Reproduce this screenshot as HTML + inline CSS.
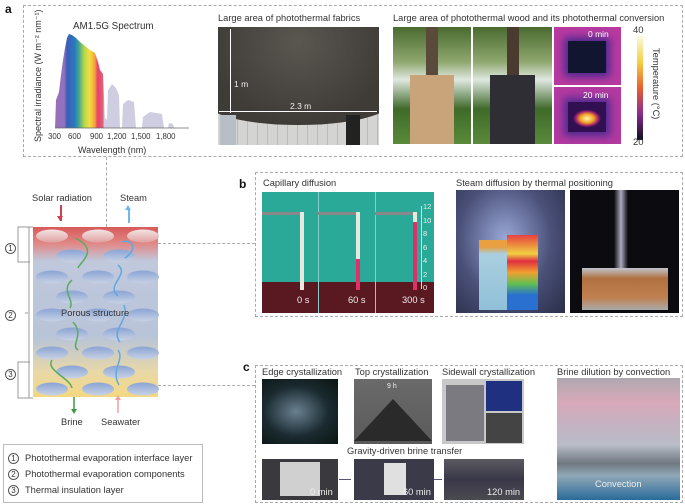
<!DOCTYPE html>
<html><head><meta charset="utf-8"><style>
*{margin:0;padding:0;box-sizing:border-box}
body{width:685px;height:504px;background:#fff;position:relative;overflow:hidden;font-family:"Liberation Sans",sans-serif;color:#333}
.a{position:absolute}
.t{position:absolute;font-size:9.3px;color:#333;white-space:nowrap}
.box{position:absolute;border:1px dashed #aaa}
.L{position:absolute;font-weight:bold;font-size:12px;color:#111}
.cn{display:inline-block;width:11px;height:11px;border:1px solid #555;border-radius:50%;font-size:8px;text-align:center;line-height:10px;margin-right:6px;vertical-align:middle}
</style></head><body>

<div class="L" style="left:5px;top:2px">a</div>
<div class="box" style="left:23px;top:5px;width:660px;height:152px"></div>

<svg class="a" style="left:0;top:0" width="215" height="160">
<defs><linearGradient id="sp" gradientUnits="userSpaceOnUse" x1="55" x2="188" y1="0" y2="0">
<stop offset="0" stop-color="#9b6fb6"/><stop offset="0.07" stop-color="#8d73c0"/><stop offset="0.09" stop-color="#3b5db5"/><stop offset="0.15" stop-color="#2a7bc0"/><stop offset="0.18" stop-color="#43a88c"/><stop offset="0.22" stop-color="#b8d64a"/><stop offset="0.26" stop-color="#f0e040"/><stop offset="0.30" stop-color="#f5a040"/><stop offset="0.32" stop-color="#e8406a"/><stop offset="0.36" stop-color="#e0607a"/><stop offset="0.37" stop-color="#cfcde2"/><stop offset="1" stop-color="#cfcde2"/></linearGradient></defs>
<polygon fill="url(#sp)" points="55,128 56,100 59,92 61,75 63,60 65,48 67,38 69,34 72,35 76,38 80,42 85,46 90,50 95,53 98,62 100,70 103,74 105,118 107,120 108,90 112,84 116,88 119,95 120,128 122,128 123,104 128,100 134,102 136,128 142,128 143,117 150,112 162,114 164,128 168,128 169,123 173,124 174,128"/>
<line x1="55" y1="128" x2="189" y2="128" stroke="#666" stroke-width="0.8"/>
<text x="73" y="29" font-size="9.8" fill="#333" font-family="Liberation Sans">AM1.5G  Spectrum</text>
<g font-size="7.8" fill="#333" font-family="Liberation Sans">
<text x="48" y="139">300</text><text x="68" y="139">600</text><text x="90" y="139">900</text><text x="107" y="139">1,200</text><text x="131" y="139">1,500</text><text x="156" y="139">1,800</text></g>
<text x="78" y="153" font-size="9" fill="#333" font-family="Liberation Sans">Wavelength (nm)</text>
<text transform="translate(41,142) rotate(-90)" font-size="9" fill="#333" font-family="Liberation Sans">Spectral irradiance (W m⁻² nm⁻¹)</text>
</svg>

<div class="t" style="left:218px;top:13px">Large area of photothermal fabrics</div>
<div class="a" style="left:218px;top:27px;width:161px;height:118px;background:repeating-linear-gradient(90deg,#d4d4d2 0,#d4d4d2 9px,#bbb 9px,#bbb 10px),#d4d4d2;overflow:hidden">
 <div class="a" style="left:-10px;top:-20px;width:181px;height:118px;background:radial-gradient(ellipse at 50% 30%,#5a5650,#3f3b37 70%);border-radius:0 0 50% 50%/0 0 18% 18%"></div>
 <div class="a" style="left:2px;top:88px;width:16px;height:30px;background:#b8bec6"></div>
 <div class="a" style="left:128px;top:88px;width:14px;height:30px;background:#222"></div>
 <div class="a" style="left:12px;top:2px;width:1px;height:84px;background:#fff"></div>
 <div class="a" style="left:1px;top:84px;width:158px;height:1px;background:#fff"></div>
 <div class="t" style="left:16px;top:52px;color:#eee;font-size:8.5px">1 m</div>
 <div class="t" style="left:72px;top:74px;color:#eee;font-size:8.5px">2.3 m</div>
</div>

<div class="t" style="left:393px;top:13px">Large area of photothermal wood and its photothermal conversion</div>
<div class="a" style="left:393px;top:27px;width:78px;height:117px;background:linear-gradient(#4a6a30,#8fa870 30%,#dfe8e0 45%,#3f6a2a 70%,#5a8a3a)">
 <div class="a" style="left:33px;top:0;width:12px;height:50px;background:#5a4a3a"></div>
 <div class="a" style="left:17px;top:48px;width:44px;height:69px;background:#c9a47a"></div></div>
<div class="a" style="left:473px;top:27px;width:79px;height:117px;background:linear-gradient(#4a6a30,#8fa870 30%,#dfe8e0 45%,#3f6a2a 70%,#5a8a3a)">
 <div class="a" style="left:34px;top:0;width:12px;height:50px;background:#4a3a30"></div>
 <div class="a" style="left:17px;top:48px;width:45px;height:69px;background:#2e2e34"></div></div>
<div class="a" style="left:554px;top:27px;width:67px;height:58px;background:#b83aa0">
 <div class="a" style="left:14px;top:14px;width:38px;height:32px;background:#111530;box-shadow:0 0 8px 4px #4a2a90"></div>
 <div class="t" style="left:34px;top:2px;color:#fff;font-size:8.5px">0 min</div></div>
<div class="a" style="left:554px;top:87px;width:67px;height:57px;background:#b23aa0">
 <div class="a" style="left:14px;top:15px;width:38px;height:30px;background:radial-gradient(ellipse 14px 9px at 50% 55%,#fff8b0,#f0a020 50%,#a02070 80%,#301050);box-shadow:0 0 8px 4px #4a2a90"></div>
 <div class="t" style="left:29px;top:3px;color:#fff;font-size:8.5px">20 min</div></div>
<div class="a" style="left:637px;top:36px;width:6px;height:104px;background:linear-gradient(#fafae0,#f6d040 25%,#e86030 50%,#8a2a90 75%,#101020)"></div>
<div class="t" style="left:633px;top:25px;font-size:9.5px">40</div>
<div class="t" style="left:633px;top:137px;font-size:9.5px">20</div>
<div class="t" style="left:661px;top:48px;transform:rotate(90deg);transform-origin:0 0">Temperature (°C)</div>

<div class="a" style="left:106px;top:157px;width:0;height:70px;border-left:1px dashed #aaa"></div>
<div class="a" style="left:158px;top:243px;width:97px;border-top:1px dashed #aaa"></div>
<div class="a" style="left:158px;top:385px;width:97px;border-top:1px dashed #aaa"></div>

<div class="t" style="left:32px;top:193px">Solar radiation</div>
<div class="t" style="left:120px;top:193px">Steam</div>
<div class="a" style="left:60px;top:205px;width:1.5px;height:16px;background:#d04050"></div>
<div class="a" style="left:57px;top:216px;border-left:3.5px solid transparent;border-right:3.5px solid transparent;border-top:5px solid #d04050"></div>
<div class="a" style="left:128px;top:209px;width:1.5px;height:14px;background:#70b8e8"></div>
<div class="a" style="left:125px;top:205px;border-left:3.5px solid transparent;border-right:3.5px solid transparent;border-bottom:5px solid #70b8e8"></div>
<div class="a" style="left:33px;top:227px;width:125px;height:170px;background:linear-gradient(#d85a5a 0,#e08a88 10%,#c0c8dc 20%,#b8c4d8 65%,#e8d8a8 85%,#f4d880 100%)"></div>
<svg class="a" style="left:0;top:0" width="200" height="440">
<defs><linearGradient id="el" x1="0" y1="0" x2="0" y2="1"><stop offset="0" stop-color="#8aa4d4"/><stop offset="1" stop-color="#c8d2e4"/></linearGradient>
<linearGradient id="el2" x1="0" y1="0" x2="0" y2="1"><stop offset="0" stop-color="#f4e4e4"/><stop offset="1" stop-color="#e0a0a0"/></linearGradient></defs>
<g fill="url(#el2)"><ellipse cx="52" cy="236" rx="16" ry="6.5"/><ellipse cx="98" cy="236" rx="16" ry="6.5"/><ellipse cx="143" cy="236" rx="16" ry="6.5"/></g>
<g fill="url(#el)">
<ellipse cx="72" cy="256" rx="16" ry="6.5"/><ellipse cx="119" cy="256" rx="16" ry="6.5"/>
<ellipse cx="52" cy="277" rx="16" ry="6.5"/><ellipse cx="98" cy="277" rx="16" ry="6.5"/><ellipse cx="143" cy="277" rx="16" ry="6.5"/>
<ellipse cx="72" cy="297" rx="16" ry="6.5"/><ellipse cx="119" cy="297" rx="16" ry="6.5"/>
<ellipse cx="52" cy="315" rx="16" ry="6.5"/><ellipse cx="98" cy="315" rx="16" ry="6.5"/><ellipse cx="143" cy="315" rx="16" ry="6.5"/>
<ellipse cx="72" cy="334" rx="16" ry="6.5"/><ellipse cx="119" cy="334" rx="16" ry="6.5"/>
<ellipse cx="52" cy="353" rx="16" ry="6.5"/><ellipse cx="98" cy="353" rx="16" ry="6.5"/><ellipse cx="143" cy="353" rx="16" ry="6.5"/>
<ellipse cx="72" cy="372" rx="16" ry="6.5"/><ellipse cx="119" cy="372" rx="16" ry="6.5"/>
<ellipse cx="52" cy="389" rx="16" ry="6.5"/><ellipse cx="98" cy="389" rx="16" ry="6.5"/><ellipse cx="143" cy="389" rx="16" ry="6.5"/></g>
<g fill="none" stroke-width="1.5">
<path d="M75 238 C100 250,80 262,78 268 M72 280 C60 290,75 300,70 308 M73 322 C85 335,70 345,78 350 M52 360 C45 370,70 378,72 388" stroke="#5aaa60"/>
<path d="M119 385 C110 370,125 360,118 350 M120 342 C110 330,130 320,124 305 M118 296 C105 285,130 275,118 265 M125 258 C140 248,130 238,122 242" stroke="#60a8e0"/>
</g>
<line x1="74" y1="397" x2="74" y2="410" stroke="#3a9a40" stroke-width="1.5"/><polygon points="71,409 77,409 74,414" fill="#3a9a40"/>
<line x1="118" y1="398" x2="118" y2="413" stroke="#f0a0a0" stroke-width="1.5"/><polygon points="115,400 121,400 118,395" fill="#f0a0a0"/>
<g fill="none" stroke="#999" stroke-width="1"><path d="M30 227 H18 V262 H30"/><path d="M30 362 H18 V398 H30"/><path d="M33 227 H29 V398 H33"/><line x1="25" y1="313" x2="28" y2="313"/></g>
</svg>
<div class="a" style="left:5px;top:240px"><span class="cn">1</span></div>
<div class="a" style="left:5px;top:307px"><span class="cn">2</span></div>
<div class="a" style="left:5px;top:366px"><span class="cn">3</span></div>
<div class="t" style="left:61px;top:308px;color:#333">Porous structure</div>
<div class="t" style="left:61px;top:417px">Brine</div>
<div class="t" style="left:101px;top:417px">Seawater</div>
<div class="a" style="left:3px;top:444px;width:200px;height:59px;border:1px solid #bbb"></div>
<div class="t" style="left:8px;top:453px"><span class="cn">1</span>Photothermal evaporation interface layer</div>
<div class="t" style="left:8px;top:469px"><span class="cn">2</span>Photothermal evaporation components</div>
<div class="t" style="left:8px;top:485px"><span class="cn">3</span>Thermal insulation layer</div>

<div class="L" style="left:239px;top:177px">b</div>
<div class="box" style="left:255px;top:172px;width:428px;height:145px"></div>
<div class="t" style="left:263px;top:178px">Capillary diffusion</div>
<div class="a" style="left:262px;top:192px;width:172px;height:121px;background:#2aa898">
 <div class="a" style="left:0;top:90px;width:172px;height:31px;background:#5a1820"></div>
 <div class="a" style="left:56px;top:0;width:1px;height:121px;background:#8cc"></div>
 <div class="a" style="left:113px;top:0;width:1px;height:121px;background:#8cc"></div>
 <div class="a" style="left:0;top:20px;width:40px;height:3px;background:#888"></div>
 <div class="a" style="left:56px;top:20px;width:40px;height:3px;background:#888"></div>
 <div class="a" style="left:113px;top:20px;width:40px;height:3px;background:#888"></div>
 <div class="a" style="left:38px;top:20px;width:4px;height:78px;background:#e8e8e0"></div>
 <div class="a" style="left:94px;top:20px;width:4px;height:78px;background:linear-gradient(#e8e8e0 60%,#e0306a 60%)"></div>
 <div class="a" style="left:151px;top:20px;width:4px;height:78px;background:linear-gradient(#e8e8e0 13%,#e0306a 13%)"></div>
 <div class="a" style="left:159px;top:14px;width:1px;height:83px;background:#ddd"></div>
 <div class="t" style="left:161px;top:8px;color:#eee;font-size:7.5px;line-height:13.5px">12<br>10<br>8<br>6<br>4<br>2<br>0</div>
 <div class="t" style="left:35px;top:103px;color:#eee">0 s</div>
 <div class="t" style="left:86px;top:103px;color:#eee">60 s</div>
 <div class="t" style="left:140px;top:103px;color:#eee">300 s</div>
</div>
<div class="t" style="left:456px;top:178px">Steam diffusion by thermal positioning</div>
<div class="a" style="left:456px;top:190px;width:109px;height:123px;background:radial-gradient(ellipse at 45% 40%,#9aa8d8,#4a5078 55%,#2a2e48)">
 <div class="a" style="left:23px;top:50px;width:28px;height:70px;background:linear-gradient(#e8a040 10%,#aacfe0 20%,#90c0d8)"></div>
 <div class="a" style="left:51px;top:45px;width:31px;height:75px;background:linear-gradient(#e84040,#f0d040 25%,#e03040 35%,#f0a030 50%,#60c050 65%,#2a70d0 80%)"></div>
</div>
<div class="a" style="left:570px;top:190px;width:109px;height:123px;background:#0c0c10">
 <div class="a" style="left:44px;top:0;width:14px;height:80px;background:linear-gradient(90deg,transparent,#aab 50%,transparent)"></div>
 <div class="a" style="left:12px;top:78px;width:86px;height:42px;background:linear-gradient(#c0c4cc,#b07040 25%,#c08050 70%,#aaa)"></div>
</div>

<div class="L" style="left:243px;top:360px">c</div>
<div class="box" style="left:255px;top:365px;width:428px;height:138px"></div>
<div class="t" style="left:262px;top:367px">Edge crystallization</div>
<div class="t" style="left:355px;top:367px">Top crystallization</div>
<div class="t" style="left:442px;top:367px">Sidewall crystallization</div>
<div class="t" style="left:557px;top:367px">Brine dilution by convection</div>
<div class="a" style="left:262px;top:379px;width:76px;height:65px;background:radial-gradient(ellipse at 45% 50%,#6a8090,#1a2a30 55%,#0a1510)"></div>
<div class="a" style="left:354px;top:379px;width:78px;height:65px;background:linear-gradient(#6a6a6a,#5a5a5a)">
 <div class="a" style="left:0;top:20px;width:0;height:0;border-left:39px solid transparent;border-right:39px solid transparent;border-bottom:42px solid #2a2a2a"></div>
 <div class="t" style="left:33px;top:4px;color:#eee;font-size:7px">9 h</div></div>
<div class="a" style="left:442px;top:379px;width:82px;height:65px;background:#c8c8c8">
 <div class="a" style="left:4px;top:6px;width:38px;height:56px;background:#7a7a80"></div>
 <div class="a" style="left:44px;top:2px;width:36px;height:30px;background:#203080"></div>
 <div class="a" style="left:44px;top:34px;width:36px;height:30px;background:#444"></div></div>
<div class="a" style="left:557px;top:378px;width:123px;height:122px;background:linear-gradient(#b0a8b0,#d8a8b8 20%,#c8b0c0 35%,#b8bcc8 55%,#707880 70%,#90a8b8 80%,#2a6a9a)">
 <div class="t" style="left:38px;top:101px;color:#eee">Convection</div></div>
<div class="t" style="left:347px;top:446px">Gravity-driven brine transfer</div>
<div class="a" style="left:262px;top:459px;width:76px;height:41px;background:#3a3a3e"><div class="a" style="left:18px;top:3px;width:40px;height:34px;background:#d0d0d0"></div><div class="t" style="left:48px;top:28px;color:#eee">0 min</div></div>
<div class="a" style="left:354px;top:459px;width:80px;height:41px;background:#3a3a48"><div class="a" style="left:30px;top:4px;width:22px;height:32px;background:#e0e0e0"></div><div class="t" style="left:49px;top:28px;color:#eee">60 min</div></div>
<div class="a" style="left:444px;top:459px;width:80px;height:41px;background:linear-gradient(#5a5a60,#3a3848 50%,#4a4a50)"><div class="t" style="left:43px;top:28px;color:#eee">120 min</div></div>
<div class="a" style="left:339px;top:479px;width:12px;height:1px;background:#557"></div>
<div class="a" style="left:434px;top:479px;width:8px;height:1px;background:#557"></div>
</body></html>
